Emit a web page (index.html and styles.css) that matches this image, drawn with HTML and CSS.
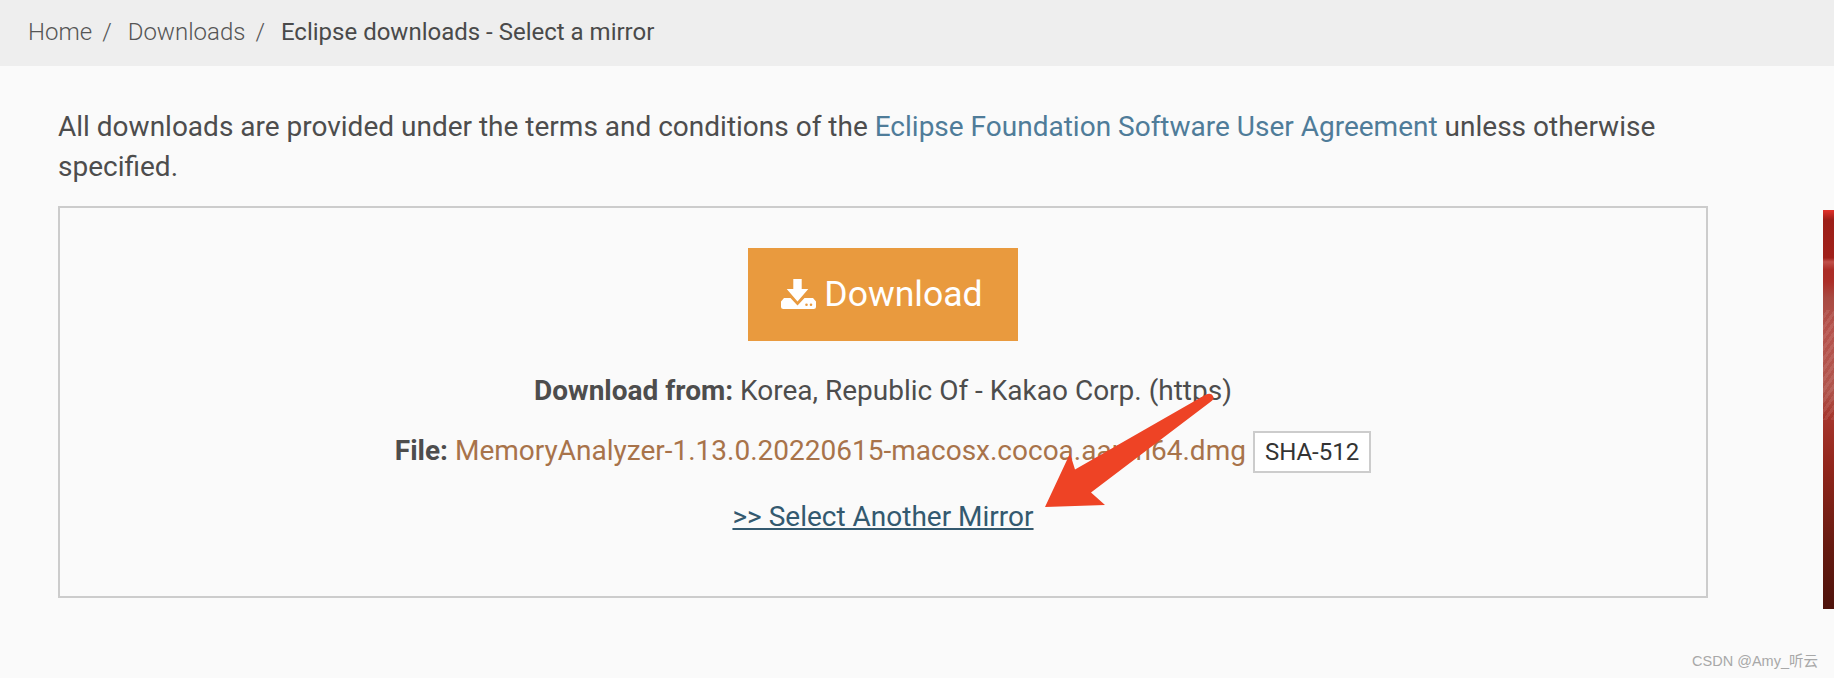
FILE: index.html
```html
<!DOCTYPE html>
<html lang="en">
<head>
<meta charset="utf-8">
<title>Eclipse downloads - Select a mirror</title>
<link rel="stylesheet" href="styles.css">
</head>
<body>
<nav class="crumbs">
  <a class="crumb" href="#">Home</a><span class="sep">/</span>
  <a class="crumb" href="#">Downloads</a><span class="sep">/</span>
  <span class="current">Eclipse downloads - Select a mirror</span>
</nav>
<div class="page">
  <main class="content">
    <p class="terms">All downloads are provided under the terms and conditions of the <a class="terms-link" href="#">Eclipse Foundation Software User Agreement</a> unless otherwise specified.</p>
    <section class="box">
      <a class="btn" href="#">
        <svg class="btn-icon" viewBox="0 0 35 30" aria-hidden="true"><path d="M12.300 0h8.400v10h6.600L16.500 22.500 5.700 10h6.600z"/><path fill-rule="evenodd" d="M3 19h6.500l7 7.500 7-7.500H32l3 3.500v5a2.500 2.500 0 0 1-2.500 2.500h-30A2.500 2.500 0 0 1 0 27.500v-5zM25.500 24.500a1.300 1.300 0 1 0 0 2.600 1.300 1.300 0 0 0 0-2.600zm4.500 0a1.300 1.300 0 1 0 0 2.600 1.300 1.300 0 0 0 0-2.600z"/></svg>
        <span>Download</span>
      </a>
      <p class="line from"><b>Download from:</b> Korea, Republic Of - Kakao Corp. (https)</p>
      <p class="line file"><b>File:</b> <a class="file-link" href="#">MemoryAnalyzer-1.13.0.20220615-macosx.cocoa.aarch64.dmg</a> <span class="sha">SHA-512</span></p>
      <p class="line other"><a class="other-link" href="#">&gt;&gt; Select Another Mirror</a></p>
    </section>
  </main>
  <aside class="strip"></aside>
</div>
<svg class="arrow" viewBox="0 0 1834 678" aria-hidden="true"><path d="M1045 507 1070 453.500 1075 469.500 1206 394.500Q1211 392.500 1213 396 1214.500 399 1211 401.500L1091 492.500 1105 505z"/></svg>
<div class="mark">CSDN @Amy_听云</div>
</body>
</html>
```
FILE: styles.css
```css
* { box-sizing: border-box; }
html, body { margin: 0; height: 100%; }
body {
  position: relative;
  height: 678px;
  overflow: hidden;
  background: #fafafa;
  color: #4d4d4d;
  font-family: Roboto, "Liberation Sans", sans-serif;
  font-size: 28px;
  line-height: 40px;
}
a { text-decoration: none; }
.crumbs {
  display: flex;
  align-items: center;
  height: 66px;
  padding: 0 28px 2px;
  background: #eeeeee;
  font-size: 24px;
  font-weight: 300;
}
.crumb { color: #555; }
.sep { color: #555; margin: 0 16px 0 10px; }
.current { color: #4a4a4a; font-weight: 400; }
.page {
  display: flex;
  align-items: flex-start;
  padding-left: 58px;
}
.content { width: 1650px; flex: none; }
.terms { margin: 41px 0 0; }
.terms-link { color: #4f7c99; }
.box {
  margin-top: 19px;
  height: 392px;
  border: 2px solid #ccc;
  padding-top: 40px;
  text-align: center;
}
.btn {
  display: flex;
  align-items: center;
  justify-content: center;
  gap: 8px;
  width: 270px;
  height: 93px;
  margin: 0 auto;
  padding: 0 2px 2px 0;
  background: #e99a3e;
  color: #fff;
  font-size: 35.600px;
}
.btn-icon { width: 35px; height: 30px; fill: #fff; }
.line { margin: 0; }
.from { margin-top: 30px; }
.file { margin-top: 20px; }
.other { margin-top: 24px; }
.file-link { color: #a8734a; }
.sha {
  display: inline-block;
  height: 42px;
  margin-left: 0;
  padding: 0 10px;
  border: 2px solid #ccc;
  background: #fff;
  color: #333;
  line-height: 38px;
  font-size: 24px;
}
.other-link { color: #33596f; text-decoration: underline; }
.strip {
  flex: none;
  width: 11px;
  height: 399px;
  margin: 144px 0 0 115px;
  background:
    repeating-linear-gradient(125deg, rgba(255, 255, 255, 0) 0 3px, rgba(255, 255, 255, 0.09) 3px 6px) 0 100px / 100% 110px no-repeat,
    linear-gradient(180deg, #e3322b 0, #9c1e18 2.500%, #a0201a 12%, #c0504a 13%, #ab2c26 15%, #ab2e28 18%, #a84a42 22%, #b5524c 30%, #b0554c 45%, #a5352c 52%, #92261c 64%, #651a10 85%, #4e120b 100%);
}
.arrow {
  position: absolute;
  inset: 0;
  width: 1834px;
  height: 678px;
  fill: #ee4325;
  pointer-events: none;
}
.mark {
  position: absolute;
  right: 16px;
  top: 651px;
  color: #a8a8a8;
  font-family: "Liberation Sans", "Noto Sans CJK SC", sans-serif;
  font-size: 14.500px;
  line-height: 20px;
}
```
